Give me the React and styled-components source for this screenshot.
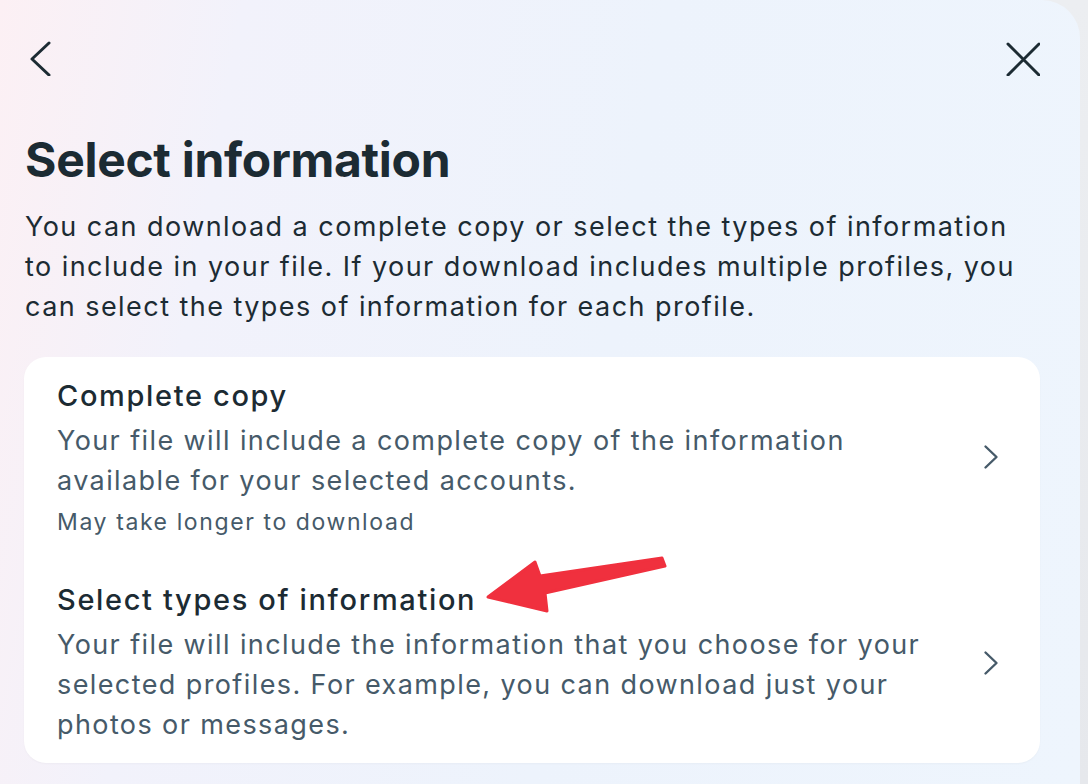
import React from "react";
import styled, { createGlobalStyle } from "styled-components";

const GlobalStyle = createGlobalStyle`
  html, body {
    margin: 0;
    padding: 0;
    background: #e9ebee;
  }
  body {
    font-family: Inter, "Noto Sans", "Liberation Sans", sans-serif;
    -webkit-font-smoothing: antialiased;
  }
`;

const Page = styled.div`
  width: 1088px;
  height: 784px;
  display: flex;
  overflow: hidden;
  background: linear-gradient(180deg, #eceef1 0%, #e6e8ec 100%);
`;

const Panel = styled.div`
  position: relative;
  width: 1080px;
  height: 784px;
  flex-shrink: 0;
  box-sizing: border-box;
  padding: 40px 40px 0 24px;
  border-top-right-radius: 38px;
  background: linear-gradient(100deg, #fcf0f4 0%, #f2f2fb 20%, #edf3fc 55%, #eef5fd 100%);
  display: flex;
  flex-direction: column;
`;

const TopBar = styled.div`
  display: flex;
  justify-content: space-between;
  align-items: center;
  height: 36px;
`;

const IconButton = styled.button`
  border: none;
  background: none;
  padding: 0;
  width: 36px;
  height: 36px;
  display: flex;
  align-items: center;
  justify-content: center;
  color: #1c2b33;
  cursor: pointer;
`;

const Title = styled.h1`
  margin: 58px 0 0 1px;
  font-size: 48px;
  line-height: 52px;
  font-weight: 700;
  letter-spacing: -0.3px;
  color: #1c2b33;
`;

const Intro = styled.p`
  margin: 21px 0 0 1px;
  font-size: 27px;
  line-height: 40px;
  letter-spacing: 1.45px;
  color: #1c2b33;
`;

const Card = styled.div`
  margin-top: 30px;
  background: #ffffff;
  border-radius: 22px;
  padding: 19px 0 18px 0;
  box-shadow: 0 1px 2px rgba(0, 0, 0, 0.03);
`;

const Option = styled.div`
  display: flex;
  align-items: center;
  padding: 0 41px 0 33px;
  margin-top: ${(p) => (p.$first ? "0" : "42px")};
  cursor: pointer;
`;

const OptionText = styled.div`
  flex: 1;
  max-width: 880px;
`;

const OptionTitle = styled.div`
  font-size: 29px;
  line-height: 40px;
  font-weight: 500;
  letter-spacing: 1.65px;
  color: #1c2b33;
`;

const OptionDesc = styled.div`
  margin-top: 5px;
  font-size: 27px;
  line-height: 40px;
  letter-spacing: 1.4px;
  color: #465a69;
`;

const OptionNote = styled.div`
  margin-top: 5px;
  font-size: 23px;
  line-height: 32px;
  letter-spacing: 1.6px;
  color: #465a69;
`;

const Chevron = styled.div`
  margin-left: auto;
  width: 16px;
  display: flex;
  justify-content: flex-end;
  color: #465a69;
`;

const Annotation = styled.svg`
  position: absolute;
  left: 480px;
  top: 550px;
  pointer-events: none;
`;

function BackIcon() {
  return (
    <svg width="36" height="36" viewBox="0 0 36 36" fill="none">
      <path d="M25 3 L8 19 L25 35" stroke="currentColor" strokeWidth="3" strokeLinecap="round" strokeLinejoin="round" />
    </svg>
  );
}

function CloseIcon() {
  return (
    <svg width="36" height="36" viewBox="0 0 36 36" fill="none">
      <path d="M4 4 L35 35 M35 4 L4 35" stroke="currentColor" strokeWidth="3" strokeLinecap="round" />
    </svg>
  );
}

function ChevronRight() {
  return (
    <svg width="16" height="26" viewBox="0 0 16 26" fill="none">
      <path d="M2.5 2.5 L13.5 13 L2.5 23.5" stroke="currentColor" strokeWidth="2.4" strokeLinecap="round" strokeLinejoin="round" />
    </svg>
  );
}

const options = [
  {
    title: "Complete copy",
    desc: "Your file will include a complete copy of the information available for your selected accounts.",
    note: "May take longer to download",
  },
  {
    title: "Select types of information",
    desc: "Your file will include the information that you choose for your selected profiles. For example, you can download just your photos or messages.",
  },
];

export default function App() {
  return (
    <>
      <GlobalStyle />
      <Page>
        <Panel>
          <TopBar>
            <IconButton aria-label="Back">
              <BackIcon />
            </IconButton>
            <IconButton aria-label="Close">
              <CloseIcon />
            </IconButton>
          </TopBar>
          <Title>Select information</Title>
          <Intro>
            You can download a complete copy or select the types of information
            to include in your file. If your download includes multiple profiles, you
            can select the types of information for each profile.
          </Intro>
          <Card>
            {options.map((o, i) => (
              <Option key={o.title} $first={i === 0}>
                <OptionText>
                  <OptionTitle>{o.title}</OptionTitle>
                  <OptionDesc>{o.desc}</OptionDesc>
                  {o.note && <OptionNote>{o.note}</OptionNote>}
                </OptionText>
                <Chevron>
                  <ChevronRight />
                </Chevron>
              </Option>
            ))}
          </Card>
          <Annotation width="200" height="70" viewBox="0 0 200 70">
            <polygon
              points="8,47 55,12 60,26 182,8 185,16 65,43 67,61"
              fill="#f0303e"
              stroke="#f0303e"
              strokeWidth="3"
              strokeLinejoin="round"
            />
          </Annotation>
        </Panel>
      </Page>
    </>
  );
}
